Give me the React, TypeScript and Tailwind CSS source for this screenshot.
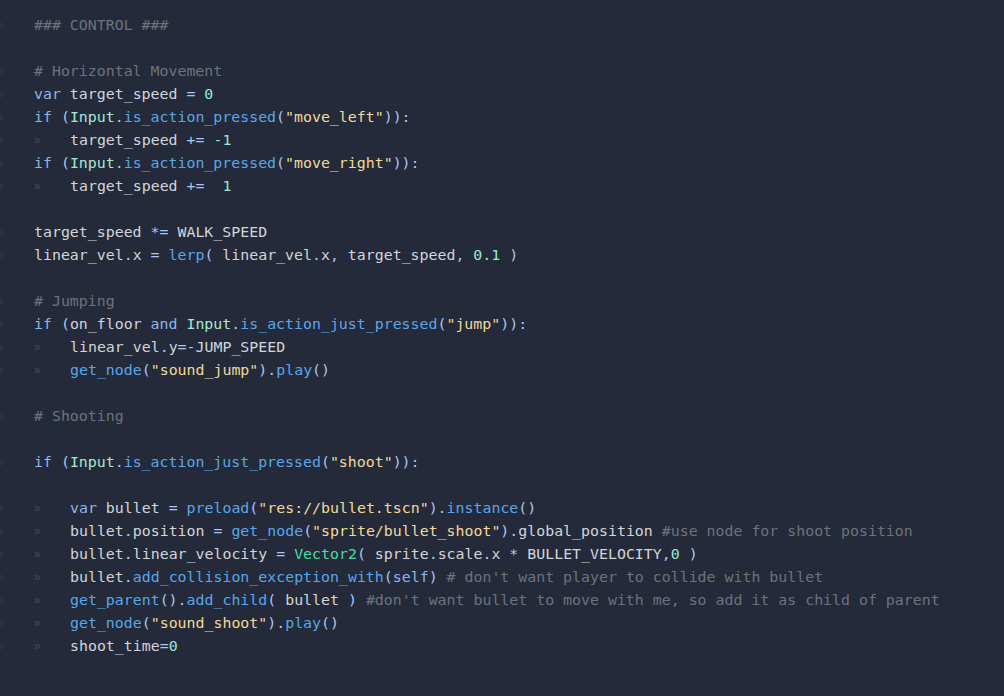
import React from "react";

type Tok = [string, string];

const C: Record<string, string> = {
  tx: "text-[#d2d5da]",
  kw: "text-[#8cb6e9]",
  sy: "text-[#a9c6f5]",
  fn: "text-[#58a7e9]",
  st: "text-[#f1da98]",
  nu: "text-[#98ebd2]",
  cl: "text-[#a6e8d2]",
  ty: "text-[#45deaa]",
  cm: "text-[#6d727d]",
};

const TAB: Tok = ["tab", ""];

const lines: Tok[][] = [
  [["cm", "### CONTROL ###"]],
  [],
  [["cm", "# Horizontal Movement"]],
  [["kw", "var"], ["tx", " target_speed "], ["sy", "="], ["tx", " "], ["nu", "0"]],
  [["kw", "if"], ["tx", " "], ["sy", "("], ["cl", "Input"], ["sy", "."], ["fn", "is_action_pressed"], ["sy", "("], ["st", "\"move_left\""], ["sy", ")):"]],
  [TAB, ["tx", "target_speed "], ["sy", "+="], ["tx", " "], ["nu", "-1"]],
  [["kw", "if"], ["tx", " "], ["sy", "("], ["cl", "Input"], ["sy", "."], ["fn", "is_action_pressed"], ["sy", "("], ["st", "\"move_right\""], ["sy", ")):"]],
  [TAB, ["tx", "target_speed "], ["sy", "+="], ["tx", "  "], ["nu", "1"]],
  [],
  [["tx", "target_speed "], ["sy", "*="], ["tx", " WALK_SPEED"]],
  [["tx", "linear_vel"], ["sy", "."], ["tx", "x "], ["sy", "="], ["tx", " "], ["fn", "lerp"], ["sy", "("], ["tx", " linear_vel"], ["sy", "."], ["tx", "x"], ["sy", ","], ["tx", " target_speed"], ["sy", ","], ["tx", " "], ["nu", "0.1"], ["tx", " "], ["sy", ")"]],
  [],
  [["cm", "# Jumping"]],
  [["kw", "if"], ["tx", " "], ["sy", "("], ["tx", "on_floor "], ["kw", "and"], ["tx", " "], ["cl", "Input"], ["sy", "."], ["fn", "is_action_just_pressed"], ["sy", "("], ["st", "\"jump\""], ["sy", ")):"]],
  [TAB, ["tx", "linear_vel"], ["sy", "."], ["tx", "y"], ["sy", "=-"], ["tx", "JUMP_SPEED"]],
  [TAB, ["fn", "get_node"], ["sy", "("], ["st", "\"sound_jump\""], ["sy", ")."], ["fn", "play"], ["sy", "()"]],
  [],
  [["cm", "# Shooting"]],
  [],
  [["kw", "if"], ["tx", " "], ["sy", "("], ["cl", "Input"], ["sy", "."], ["fn", "is_action_just_pressed"], ["sy", "("], ["st", "\"shoot\""], ["sy", ")):"]],
  [],
  [TAB, ["kw", "var"], ["tx", " bullet "], ["sy", "="], ["tx", " "], ["fn", "preload"], ["sy", "("], ["st", "\"res://bullet.tscn\""], ["sy", ")."], ["fn", "instance"], ["sy", "()"]],
  [TAB, ["tx", "bullet"], ["sy", "."], ["tx", "position "], ["sy", "="], ["tx", " "], ["fn", "get_node"], ["sy", "("], ["st", "\"sprite/bullet_shoot\""], ["sy", ")."], ["tx", "global_position "], ["cm", "#use node for shoot position"]],
  [TAB, ["tx", "bullet"], ["sy", "."], ["tx", "linear_velocity "], ["sy", "="], ["tx", " "], ["ty", "Vector2"], ["sy", "("], ["tx", " sprite"], ["sy", "."], ["tx", "scale"], ["sy", "."], ["tx", "x "], ["sy", "*"], ["tx", " BULLET_VELOCITY"], ["sy", ","], ["nu", "0"], ["tx", " "], ["sy", ")"]],
  [TAB, ["tx", "bullet"], ["sy", "."], ["fn", "add_collision_exception_with"], ["sy", "("], ["kw", "self"], ["sy", ")"], ["tx", " "], ["cm", "# don't want player to collide with bullet"]],
  [TAB, ["fn", "get_parent"], ["sy", "()."], ["fn", "add_child"], ["sy", "("], ["tx", " bullet "], ["sy", ")"], ["tx", " "], ["cm", "#don't want bullet to move with me, so add it as child of parent"]],
  [TAB, ["fn", "get_node"], ["sy", "("], ["st", "\"sound_shoot\""], ["sy", ")."], ["fn", "play"], ["sy", "()"]],
  [TAB, ["tx", "shoot_time"], ["sy", "="], ["nu", "0"]],
];

function Chevrons({ color }: { color: string }) {
  return (
    <svg width="7" height="7" viewBox="0 0 7 7" className="block">
      <path
        d="M0.5 0.8 L3 3.5 L0.5 6.2 M3.5 0.8 L6 3.5 L3.5 6.2"
        fill="none"
        stroke={color}
        strokeWidth="1"
      />
    </svg>
  );
}

export default function App() {
  return (
    <div
      className="w-[1004px] h-[696px] overflow-hidden bg-[#242a39] pt-[14px]"
      style={{ fontFamily: '"DejaVu Sans Mono", "Liberation Mono", monospace' }}
    >
      {lines.map((line, i) => (
        <div key={i} className="flex h-[23px] items-center text-[14.9px] leading-[23px]">
          <div className="relative w-[34px] shrink-0 h-full flex items-center">
            {line.length > 0 && (
              <div className="absolute left-[-3px] top-[8px]">
                <Chevrons color="#3d4557" />
              </div>
            )}
          </div>
          <div className="whitespace-pre flex items-center">
            {line.map((tok, j) =>
              tok[0] === "tab" ? (
                <span key={j} className="inline-flex w-[36px] h-[23px] items-center pl-[0px]">
                  <Chevrons color="#4b556a" />
                </span>
              ) : (
                <span key={j} className={C[tok[0]]}>
                  {tok[1]}
                </span>
              )
            )}
          </div>
        </div>
      ))}
    </div>
  );
}
